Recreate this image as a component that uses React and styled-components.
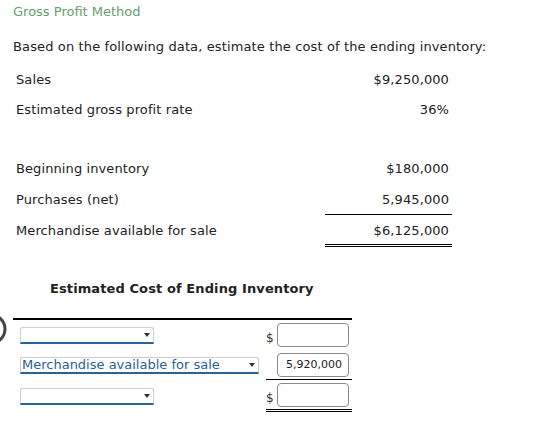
import styled, { createGlobalStyle } from 'styled-components';

const GlobalStyle = createGlobalStyle`
  body {
    margin: 0;
    background: #fff;
    font-family: Verdana, "DejaVu Sans", sans-serif;
    color: #222;
  }
`;

const Page = styled.div`
  position: relative;
  width: 548px;
  height: 440px;
  overflow: hidden;
  padding: 4px 0 0 13px;
  box-sizing: border-box;
`;

const Title = styled.div`
  font-size: 13px;
  color: #5f9f6b;
  line-height: 16px;
`;

const Prompt = styled.div`
  margin-top: 19px;
  font-size: 13px;
  letter-spacing: 0.13px;
  line-height: 16px;
  color: #222;
`;

const DataTable = styled.div`
  margin: 10px 0 0 3px;
  display: grid;
  grid-template-columns: 309px 127px;
  font-size: 13px;
  letter-spacing: 0.1px;
`;

const Label = styled.div`
  height: ${p => p.$h || 30}px;
  line-height: ${p => p.$h || 30}px;
`;

const Value = styled.div`
  height: ${p => p.$h || 30}px;
  line-height: ${p => p.$h || 30}px;
  text-align: right;
  padding-right: 3px;
  box-sizing: border-box;
  border-bottom: ${p => (p.$rule === 'single' ? '1px solid #000' : p.$rule === 'double' ? '3px double #000' : 'none')};
`;

const Spacer = styled.div`
  height: 29px;
  grid-column: span 2;
`;

const SubHeading = styled.div`
  margin: 34px 0 0 37px;
  font-size: 13px;
  font-weight: bold;
  letter-spacing: 0.1px;
  color: #222;
`;

const Worksheet = styled.div`
  margin-top: 22px;
  width: 339px;
  border-top: 2px solid #000;
  display: grid;
  grid-template-columns: 253px 86px;
`;

const SelectCell = styled.div`
  display: flex;
  align-items: center;
  padding-left: 7px;
  height: ${p => p.$h}px;
`;

const Select = styled.div`
  width: ${p => p.$w}px;
  height: 17px;
  box-sizing: border-box;
  border: 1px solid #cfcfcf;
  border-bottom: 2px solid #2a6496;
  border-radius: 3px 3px 0 0;
  background: #fff;
  display: flex;
  align-items: center;
  justify-content: space-between;
  font-size: 13px;
  color: #2a5f93;
  line-height: 14px;
  padding-left: 1px;
  box-shadow: 0 0 1px rgba(0, 0, 0, 0.15);
`;

const Caret = styled.span`
  width: 0;
  height: 0;
  border-left: 3.5px solid transparent;
  border-right: 3.5px solid transparent;
  border-top: 4px solid #333;
  margin-right: 3px;
`;

const AmountCell = styled.div`
  display: flex;
  align-items: center;
  height: ${p => p.$h}px;
  box-sizing: border-box;
  border-bottom: ${p => (p.$rule === 'single' ? '1px solid #000' : p.$rule === 'double' ? '3px double #000' : 'none')};
`;

const Dollar = styled.span`
  width: 11px;
  font-size: 12px;
  color: #333;
  margin-top: 6px;
`;

const Box = styled.div`
  width: 72px;
  height: 24px;
  box-sizing: border-box;
  border: 1px solid #8a8a8a;
  border-radius: 4px;
  background: #fff;
  font-size: 11px;
  line-height: 22px;
  text-align: right;
  padding-right: 6px;
  color: #222;
  margin-left: ${p => (p.$shift ? 11 : 0)}px;
`;

const Ring = styled.svg`
  position: absolute;
  left: 0;
  top: 311px;
`;

export default function App() {
  return (
    <>
      <GlobalStyle />
      <Page>
        <Title>Gross Profit Method</Title>
        <Prompt>Based on the following data, estimate the cost of the ending inventory:</Prompt>
        <DataTable>
          <Label>Sales</Label>
          <Value>$9,250,000</Value>
          <Label>Estimated gross profit rate</Label>
          <Value>36%</Value>
          <Spacer />
          <Label>Beginning inventory</Label>
          <Value>$180,000</Value>
          <Label $h={31}>Purchases (net)</Label>
          <Value $h={31} $rule="single">5,945,000</Value>
          <Label $h={32}>Merchandise available for sale</Label>
          <Value $h={32} $rule="double">$6,125,000</Value>
        </DataTable>
        <SubHeading>Estimated Cost of Ending Inventory</SubHeading>
        <Worksheet>
          <SelectCell $h={30}>
            <Select $w={134}>
              <span />
              <Caret />
            </Select>
          </SelectCell>
          <AmountCell $h={30}>
            <Dollar>$</Dollar>
            <Box />
          </AmountCell>
          <SelectCell $h={30}>
            <Select $w={239}>
              <span>Merchandise available for sale</span>
              <Caret />
            </Select>
          </SelectCell>
          <AmountCell $h={30} $rule="single">
            <Box $shift>5,920,000</Box>
          </AmountCell>
          <SelectCell $h={32}>
            <Select $w={134}>
              <span />
              <Caret />
            </Select>
          </SelectCell>
          <AmountCell $h={32} $rule="double">
            <Dollar>$</Dollar>
            <Box />
          </AmountCell>
        </Worksheet>
        <Ring width="8" height="36" viewBox="0 0 8 36">
          <circle cx="-9" cy="18" r="14" fill="none" stroke="#444" strokeWidth="3" />
        </Ring>
      </Page>
    </>
  );
}
